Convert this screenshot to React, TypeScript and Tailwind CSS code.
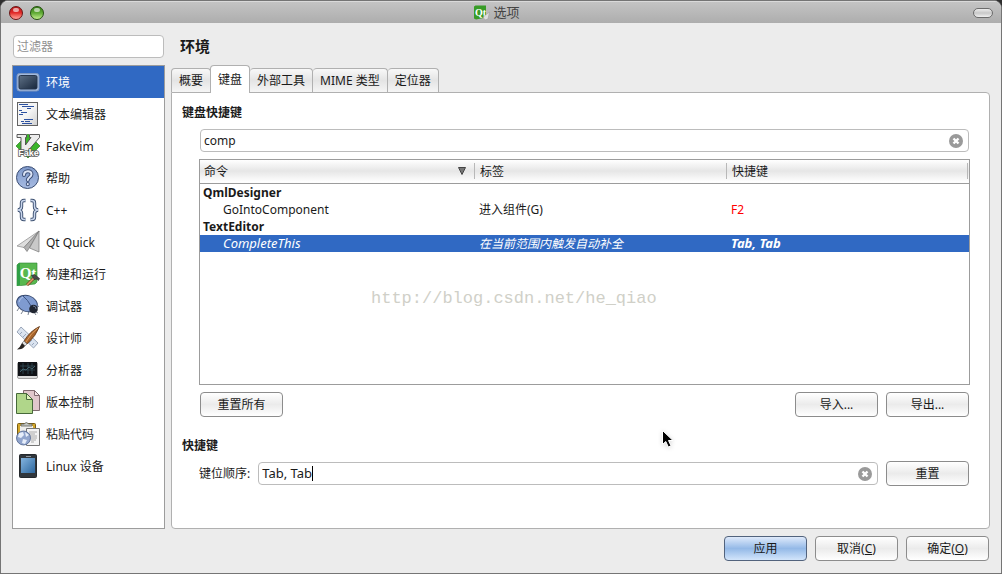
import { useState } from "react";
import type { ReactNode } from "react";
import clsx from "clsx";

const TABS = ["概要", "键盘", "外部工具", "MIME 类型", "定位器"];

/* ── CATEGORY ICONS ── */
function Icon({ children }: { children: ReactNode }) {
  return (
    <svg viewBox="0 0 24 24" className="size-6 shrink-0" aria-hidden="true">
      {children}
    </svg>
  );
}

function EnvironmentIcon() {
  return (
    <Icon>
      <defs>
        <linearGradient id="screen" x1="0" y1="0" x2="1" y2="1">
          <stop offset="0" stopColor="#5f7186" />
          <stop offset="1" stopColor="#17263b" />
        </linearGradient>
      </defs>
      <rect x="1" y="3.500" width="22" height="17.500" rx="2.500" fill="#a3bbdf" stroke="#7f97bf" />
      <rect x="3" y="5.500" width="18" height="13.500" rx="1.500" fill="url(#screen)" stroke="#27364d" />
    </Icon>
  );
}

function TextEditorIcon() {
  return (
    <Icon>
      <defs>
        <linearGradient id="page" x1="0" y1="0" x2="1" y2="1">
          <stop offset="0.5" stopColor="#f5f5f5" />
          <stop offset="1" stopColor="#cfcfcf" />
        </linearGradient>
      </defs>
      <rect x="1.500" y="0.500" width="20" height="23" fill="url(#page)" stroke="#636363" />
      <path
        d="M3 2.500h9M6 4.500h12M11 6.500h4M3 8.500h3M5 10.500h6M3 12.500h4M8 17.500h9M5 19.500h3M9 19.500h5M6 21.500h10"
        stroke="#2d52a0"
      />
    </Icon>
  );
}

function FakeVimIcon() {
  return (
    <Icon>
      <path d="M12 0l12 12-12 12L0 12z" fill="#3bb52a" stroke="#1c6d13" strokeWidth="0.6" />
      <path
        d="M1 .5h9.500v3H9.500V11L15 3.500h-1.500v-3H23.500v3L11 18H5V3.500H1z"
        fill="#ececec"
        stroke="#4a4a4a"
        strokeWidth="0.9"
      />
      <text
        x="12.500"
        y="22"
        textAnchor="middle"
        fontSize="9"
        fontWeight="bold"
        fontFamily="Liberation Sans, sans-serif"
        fill="#fff"
        stroke="#5c5c5c"
        strokeWidth="1.600"
        paintOrder="stroke"
      >
        Fake
      </text>
    </Icon>
  );
}

function HelpIcon() {
  return (
    <Icon>
      <defs>
        <linearGradient id="help" x1="0" y1="0" x2="0" y2="1">
          <stop offset="0" stopColor="#7f99ca" />
          <stop offset="1" stopColor="#a7bbe2" />
        </linearGradient>
      </defs>
      <circle cx="11.500" cy="11.500" r="11" fill="url(#help)" stroke="#3c4e73" />
      <g fill="none" strokeLinecap="round">
        <path d="M8 9c0-5 7.500-5 7.500-.8 0 3-3.700 3-3.700 5.800M11.800 18v.3" stroke="#40527a" strokeWidth="4" />
        <path d="M8 9c0-5 7.500-5 7.500-.8 0 3-3.700 3-3.700 5.800M11.800 18v.3" stroke="#dce4f5" strokeWidth="2" />
      </g>
    </Icon>
  );
}

function CppIcon() {
  const braces =
    "M9.500 2.500H8Q5.500 2.500 5.500 5v3.500Q5.500 11.500 2 12q3.500.5 3.500 3.500V19q0 2.500 2.500 2.500h1.500M14.500 2.500H16q2.500 0 2.500 2.500v3.500q0 3 3.500 3.500-3.500.5-3.500 3.500V19q0 2.500-2.500 2.500h-1.500";
  return (
    <Icon>
      <path d={braces} fill="none" stroke="#3f5272" strokeWidth="3.400" />
      <path d={braces} fill="none" stroke="#c8d5ec" strokeWidth="1.500" />
    </Icon>
  );
}

function QtQuickIcon() {
  return (
    <Icon>
      <path d="M23 1L1 16l7 1.500L23 1z" fill="#dedede" stroke="#8a8a8a" strokeWidth="0.7" />
      <path d="M23 1L8 17.500l3 4 2-3.200L23 1z" fill="#b1b1b1" stroke="#777" strokeWidth="0.7" />
      <path d="M23 1l-9.500 17L23 22z" fill="#c9c9c9" stroke="#777" strokeWidth="0.7" />
    </Icon>
  );
}

function BuildIcon() {
  return (
    <Icon>
      <path d="M1 3l2-2h18v19l-2 2-18 2z" fill="#58b84f" stroke="#2d8434" strokeWidth="0.6" />
      <path d="M1 3v21l3-1V1z" fill="#2f9f44" />
      <text
        x="12"
        y="16"
        textAnchor="middle"
        fontSize="15"
        fontWeight="bold"
        fontFamily="Liberation Serif, serif"
        fill="#fff"
      >
        Qt
      </text>
      <path d="M11 23l8-8" stroke="#7c4424" strokeWidth="3" />
      <path d="M11 23l8-8" stroke="#dc9a68" strokeWidth="1.600" />
      <path d="M15.500 13.500l3-1 5 4-1 2-2-1.500-2 .5z" fill="#4a4a4a" stroke="#222" strokeWidth="0.6" />
    </Icon>
  );
}

function DebuggerIcon() {
  return (
    <Icon>
      <path d="M3 14l-2 3M7 17l-2 3M13 17l-1 4M20 18l2 1M18 18l2 3M20 14l3-2" stroke="#7d8592" />
      <ellipse cx="11" cy="9.500" rx="10.500" ry="8" transform="rotate(18 11 9.500)" fill="#7f9bd0" stroke="#35486e" />
      <path d="M7 2q5 4 8 10" fill="none" stroke="#3d5380" />
      <path d="M3 8q1-4 4-5" fill="none" stroke="#b3c6ea" />
      <circle cx="17.500" cy="15" r="4.300" fill="#202631" />
      <path d="M17 12q3 0 3 3" fill="none" stroke="#68758c" />
    </Icon>
  );
}

function DesignerIcon() {
  return (
    <Icon>
      <path d="M5 1l17 16-4.500 5L1 6z" fill="#dbe4f0" stroke="#8492a8" strokeWidth="0.8" />
      <path d="M4 8l2-2M7 11l3-3M10 13l2-2M13 17l3-3M16 19l2-2" stroke="#8796ae" strokeWidth="0.8" />
      <path d="M23.500 .5Q14 5 8 15l3 3Q20 10 23.500.5z" fill="#a8652c" stroke="#5b3112" strokeWidth="0.8" />
      <path d="M22 2Q15 7 10 16" stroke="#dd9c5e" fill="none" />
      <path d="M8 15l3 3-2 2-3-3z" fill="#ddd" stroke="#666" strokeWidth="0.6" />
      <path d="M6 17l3 3q-2 3.500-8 3.500 3-2 5-6.500z" fill="#292522" />
    </Icon>
  );
}

function AnalyzerIcon() {
  return (
    <Icon>
      <rect x="1.500" y="4.500" width="20" height="16" rx="1.500" fill="#dcdcdc" stroke="#a3a3a3" />
      <path d="M2 4h19v14H2z" fill="#101317" />
      <path d="M4 8h15M4 12h15M7 5v11M12 5v11M16 5v11" stroke="#35515d" strokeWidth="0.7" />
      <path d="M4 14l3-3 3 1 3-3 3 2 3-3" fill="none" stroke="#4d727d" strokeWidth="0.8" />
    </Icon>
  );
}

function VersionControlIcon() {
  return (
    <Icon>
      <path d="M7.500.5h11l5 5v15h-16z" fill="#e1c7cb" stroke="#806a6f" />
      <path d="M18.500.5v5h5z" fill="#f5e4e7" stroke="#806a6f" />
      <path d="M.5 3.500h10l6 6v14H.5z" fill="#b0d68a" stroke="#46693a" />
      <path d="M10.500 3.500v6h6z" fill="#e0f3bd" stroke="#46693a" />
    </Icon>
  );
}

function PasteIcon() {
  return (
    <Icon>
      <rect x="1.500" y="1.500" width="18" height="17" rx="1" fill="#d4a72a" stroke="#785c12" />
      <path d="M4 4h13v12H4z" fill="#eeeeec" />
      <path d="M5 4V2h3q2-3 5 0h3v2z" fill="#c7c9c4" stroke="#5c5e59" strokeWidth="0.8" />
      <path d="M10.500 6.500h13v17h-13z" fill="#f4f4f4" stroke="#757575" />
      <path d="M13 10h8M13 12h6M13 14h8M15 16h6M15 18h5M15 20h3" stroke="#9b9b9b" strokeWidth="0.8" />
      <circle cx="7.500" cy="16" r="7" fill="#91a5cd" stroke="#4e628c" strokeWidth="0.8" />
      <path d="M3 11l4-1 1 3-3 3-3-1zM9 10l4 3-3 2zM7 17l4 1-2 4-3-1z" fill="#e6edf9" />
    </Icon>
  );
}

function DeviceIcon() {
  return (
    <Icon>
      <defs>
        <linearGradient id="phone" x1="0" y1="0" x2="1" y2="1">
          <stop offset="0" stopColor="#84b4df" />
          <stop offset="1" stopColor="#2d679e" />
        </linearGradient>
      </defs>
      <rect x="3.500" y="0.500" width="17" height="23" rx="1" fill="#30363c" stroke="#24282c" />
      <path d="M5 4h14v15H5z" fill="url(#phone)" />
      <path d="M10 2.500h5" stroke="#92999f" />
    </Icon>
  );
}

const CATEGORIES = [
  { name: "环境", icon: EnvironmentIcon },
  { name: "文本编辑器", icon: TextEditorIcon },
  { name: "FakeVim", icon: FakeVimIcon },
  { name: "帮助", icon: HelpIcon },
  { name: "C++", icon: CppIcon },
  { name: "Qt Quick", icon: QtQuickIcon },
  { name: "构建和运行", icon: BuildIcon },
  { name: "调试器", icon: DebuggerIcon },
  { name: "设计师", icon: DesignerIcon },
  { name: "分析器", icon: AnalyzerIcon },
  { name: "版本控制", icon: VersionControlIcon },
  { name: "粘贴代码", icon: PasteIcon },
  { name: "Linux 设备", icon: DeviceIcon },
];

/* ── SMALL CONTROLS ── */
function PushButton({ children, primary }: { children: ReactNode; primary?: boolean }) {
  return (
    <button
      className={clsx(
        "h-[25px] w-[83px] shrink-0 rounded border bg-linear-to-b",
        primary
          ? "border-[#52637d] from-[#dfeafb] via-[#94b9e7] to-[#d3e5fb]"
          : "border-[#8c8c8c] from-white via-[#ebebeb] to-white"
      )}
    >
      {children}
    </button>
  );
}

function ClearButton({ onClick }: { onClick: () => void }) {
  return (
    <button onClick={onClick} aria-label="清除" className="ml-auto shrink-0">
      <svg viewBox="0 0 14 14" className="size-3.5">
        <circle cx="7" cy="7" r="7" fill="#9a9a9a" />
        <path d="M4.500 4.500l5 5M9.500 4.500l-5 5" stroke="#fff" strokeWidth="2.400" />
      </svg>
    </button>
  );
}

function TrafficLight({ color, label }: { color: "red" | "green"; label: string }) {
  return (
    <button
      aria-label={label}
      className={clsx(
        "flex size-3.5 justify-center rounded-full border bg-linear-to-b",
        color === "red"
          ? "border-[#6b1414] from-[#b91818] via-[#e32b2b] to-[#ffa09a]"
          : "border-[#24500f] from-[#39801a] via-[#60ab35] to-[#c4f08c]"
      )}
    >
      <span className="mt-px h-1 w-1.5 rounded-full bg-white/60" />
    </button>
  );
}

export default function App() {
  const [category, setCategory] = useState("环境");
  const [tab, setTab] = useState("键盘");
  const [filter, setFilter] = useState("");
  const [search, setSearch] = useState("comp");
  const [keys, setKeys] = useState("Tab, Tab");

  return (
    <div className="flex min-h-screen flex-col bg-[#2e2e2e] font-['Noto_Sans','Noto_Sans_CJK_SC',sans-serif] text-[12px] leading-[17px] text-[#1a1a1a]">
      <div className="flex flex-1 flex-col overflow-hidden rounded-t-lg border border-[#757575] bg-[#ececec]">
        {/* ── TITLE BAR ── */}
        <header className="grid h-[22px] grid-cols-[1fr_auto_1fr] items-center border-t border-[#dadada] bg-linear-to-b from-[#c4c4c4] to-[#adadad] px-2">
          <div className="flex gap-[7px]">
            <TrafficLight color="red" label="关闭" />
            <TrafficLight color="green" label="最大化" />
          </div>
          <h1 className="flex items-center gap-[3px] pr-2 text-[13px] text-[#444]">
            <svg viewBox="0 0 16 16" className="size-4" aria-hidden="true">
              <path d="M0 1.500L1.500.5H12v12l-10 2-2-1z" fill="#389c27" />
              <text
                x="6.500"
                y="10.500"
                textAnchor="middle"
                fontSize="10"
                fontWeight="bold"
                fontFamily="Liberation Serif, serif"
                fill="#fff"
              >
                Qt
              </text>
              <path d="M15.500 7L9 12l2 3 3-1z" fill="#dedede" stroke="#999" strokeWidth="0.5" />
            </svg>
            选项
          </h1>
          <button
            aria-label="最小化"
            className="h-2.5 w-5 justify-self-end rounded-full border border-[#6c6c6c] bg-linear-to-b from-[#ededed] via-[#c8c8c8] to-[#f0f0f0]"
          />
        </header>

        <div className="grid flex-1 grid-cols-[153px_1fr] gap-x-[6px] px-[11px] pt-3">
          {/* ── CATEGORIES ── */}
          <aside className="flex flex-col gap-[7px]">
            <input
              type="text"
              aria-label="过滤器"
              placeholder="过滤器"
              value={filter}
              onChange={(e) => setFilter(e.target.value)}
              className="mx-px h-[23px] rounded border border-[#bcbcbc] bg-white px-[3px] outline-none placeholder:text-[#909090]"
            />
            <ul className="flex-1 border border-[#9c9c9c] bg-white">
              {CATEGORIES.filter((c) => c.name.includes(filter)).map(({ name, icon: CategoryIcon }) => (
                <li key={name}>
                  <button
                    onClick={() => setCategory(name)}
                    className={clsx(
                      "flex h-8 w-full items-center gap-1.5 px-[3px] text-left",
                      category === name && "bg-[#3069c3] text-white"
                    )}
                  >
                    <CategoryIcon />
                    {name}
                  </button>
                </li>
              ))}
            </ul>
          </aside>

          <main className="flex min-w-0 flex-col">
            <h2 className="h-[23px] pl-[9px] text-[15px] leading-[23px] font-bold">{category}</h2>

            {/* ── TABS ── */}
            <div role="tablist" className="relative mt-[7px] -mb-px flex h-7 items-end">
              {TABS.map((name) => (
                <button
                  key={name}
                  role="tab"
                  aria-selected={tab === name}
                  onClick={() => setTab(name)}
                  className={clsx(
                    "border-t border-r border-[#b0b0b0] px-[7px] first:border-l",
                    tab === name
                      ? "-ml-px h-7 rounded-t border-l bg-white"
                      : "mb-px h-6 rounded-t-sm bg-linear-to-b from-[#f8f8f8] via-[#e4e4e4] to-[#f5f5f5]"
                  )}
                >
                  {name}
                </button>
              ))}
            </div>

            <section className="flex flex-1 flex-col rounded-b rounded-tr border border-[#b0b0b0] bg-white pt-[11px] pr-[19px] pb-[42px] pl-2.5">
              <h3 className="font-bold">键盘快捷键</h3>
              <div className="ml-[17px] flex flex-1 flex-col">
                <div className="mx-px mt-2 flex h-[23px] items-center rounded border border-[#bcbcbc] px-[3px] pr-[5px]">
                  <input
                    type="text"
                    aria-label="搜索命令"
                    value={search}
                    onChange={(e) => setSearch(e.target.value)}
                    className="min-w-0 flex-1 outline-none"
                  />
                  <ClearButton onClick={() => setSearch("")} />
                </div>

                {/* ── SHORTCUT TABLE ── */}
                <div className="relative mt-[7px] flex-1 border border-[#9c9c9c]">
                  <table className="w-full table-fixed border-collapse text-left">
                    <colgroup>
                      <col className="w-[275px]" />
                      <col className="w-[252px]" />
                      <col />
                    </colgroup>
                    <thead>
                      <tr className="h-[23px] border-b border-[#9c9c9c] bg-linear-to-b from-white via-[#e6e6e6] to-white">
                        <th className="p-0 font-normal">
                          <div className="flex h-4 items-center justify-between border-r border-[#b8b8b8] pr-2 pl-1">
                            命令
                            <svg viewBox="0 0 8 8" className="size-2" aria-hidden="true">
                              <path d="M.5.5h7L4 7.500z" fill="#777" stroke="#444" />
                            </svg>
                          </div>
                        </th>
                        <th className="p-0 font-normal">
                          <div className="flex h-4 items-center border-r border-[#b8b8b8] pl-[5px]">标签</div>
                        </th>
                        <th className="p-0 pr-px font-normal">
                          <div className="flex h-4 items-center border-r border-[#b8b8b8] pl-[5px]">快捷键</div>
                        </th>
                      </tr>
                    </thead>
                    <tbody>
                      <tr>
                        <td colSpan={3} className="h-[17px] p-0 pl-[3px] font-bold">QmlDesigner</td>
                      </tr>
                      <tr>
                        <td className="h-[17px] p-0 pl-[23px]">GoIntoComponent</td>
                        <td className="p-0 pl-1">进入组件(G)</td>
                        <td className="p-0 pl-1 text-[#ff0000]">F2</td>
                      </tr>
                      <tr>
                        <td colSpan={3} className="h-[17px] p-0 pl-[3px] font-bold">TextEditor</td>
                      </tr>
                      <tr className="bg-[#3069c3] text-white italic">
                        <td className="h-[17px] p-0 pl-[23px] text-[13px]">CompleteThis</td>
                        <td className="p-0 pl-1">在当前范围内触发自动补全</td>
                        <td className="p-0 pl-1 text-[13px] font-bold">Tab, Tab</td>
                      </tr>
                    </tbody>
                  </table>
                  <p className="pointer-events-none absolute top-[129px] left-[171px] font-['Liberation_Mono',monospace] text-[17px] leading-5 text-[#d0d0c8]">
                    http://blog.csdn.net/he_qiao
                  </p>
                </div>

                <div className="mx-px mt-[7px] flex gap-2">
                  <PushButton>重置所有</PushButton>
                  <span className="flex-1" />
                  <PushButton>导入...</PushButton>
                  <PushButton>导出...</PushButton>
                </div>
              </div>

              <h3 className="mt-5 font-bold">快捷键</h3>
              <div className="mt-[7px] mr-px ml-[17px] flex items-center gap-2">
                <label htmlFor="key-sequence">键位顺序:</label>
                <div className="flex h-[23px] flex-1 items-center rounded border border-[#bcbcbc] px-[3px] pr-[5px]">
                  <input
                    id="key-sequence"
                    type="text"
                    value={keys}
                    onChange={(e) => setKeys(e.target.value)}
                    className="field-sizing-content text-[13px] caret-transparent outline-none"
                  />
                  <span className="h-[15px] w-px bg-black" />
                  <ClearButton onClick={() => setKeys("")} />
                </div>
                <PushButton>重置</PushButton>
              </div>
            </section>
          </main>
        </div>

        {/* ── DIALOG BUTTONS ── */}
        <footer className="flex justify-end gap-2 px-3 pt-[7px] pb-3">
          <PushButton primary>应用</PushButton>
          <PushButton>
            取消(<u>C</u>)
          </PushButton>
          <PushButton>
            确定(<u>O</u>)
          </PushButton>
        </footer>
      </div>

      {/* Mouse pointer */}
      <svg
        viewBox="0 0 12 18"
        className="pointer-events-none absolute top-[430px] left-[662px] h-[18px] w-3 drop-shadow-sm"
        aria-hidden="true"
      >
        <path d="M.5.5v14l3.300-3 2.500 5.500 2.700-1.200-2.500-5.300h4.500z" fill="#000" stroke="#fff" />
      </svg>
    </div>
  );
}
